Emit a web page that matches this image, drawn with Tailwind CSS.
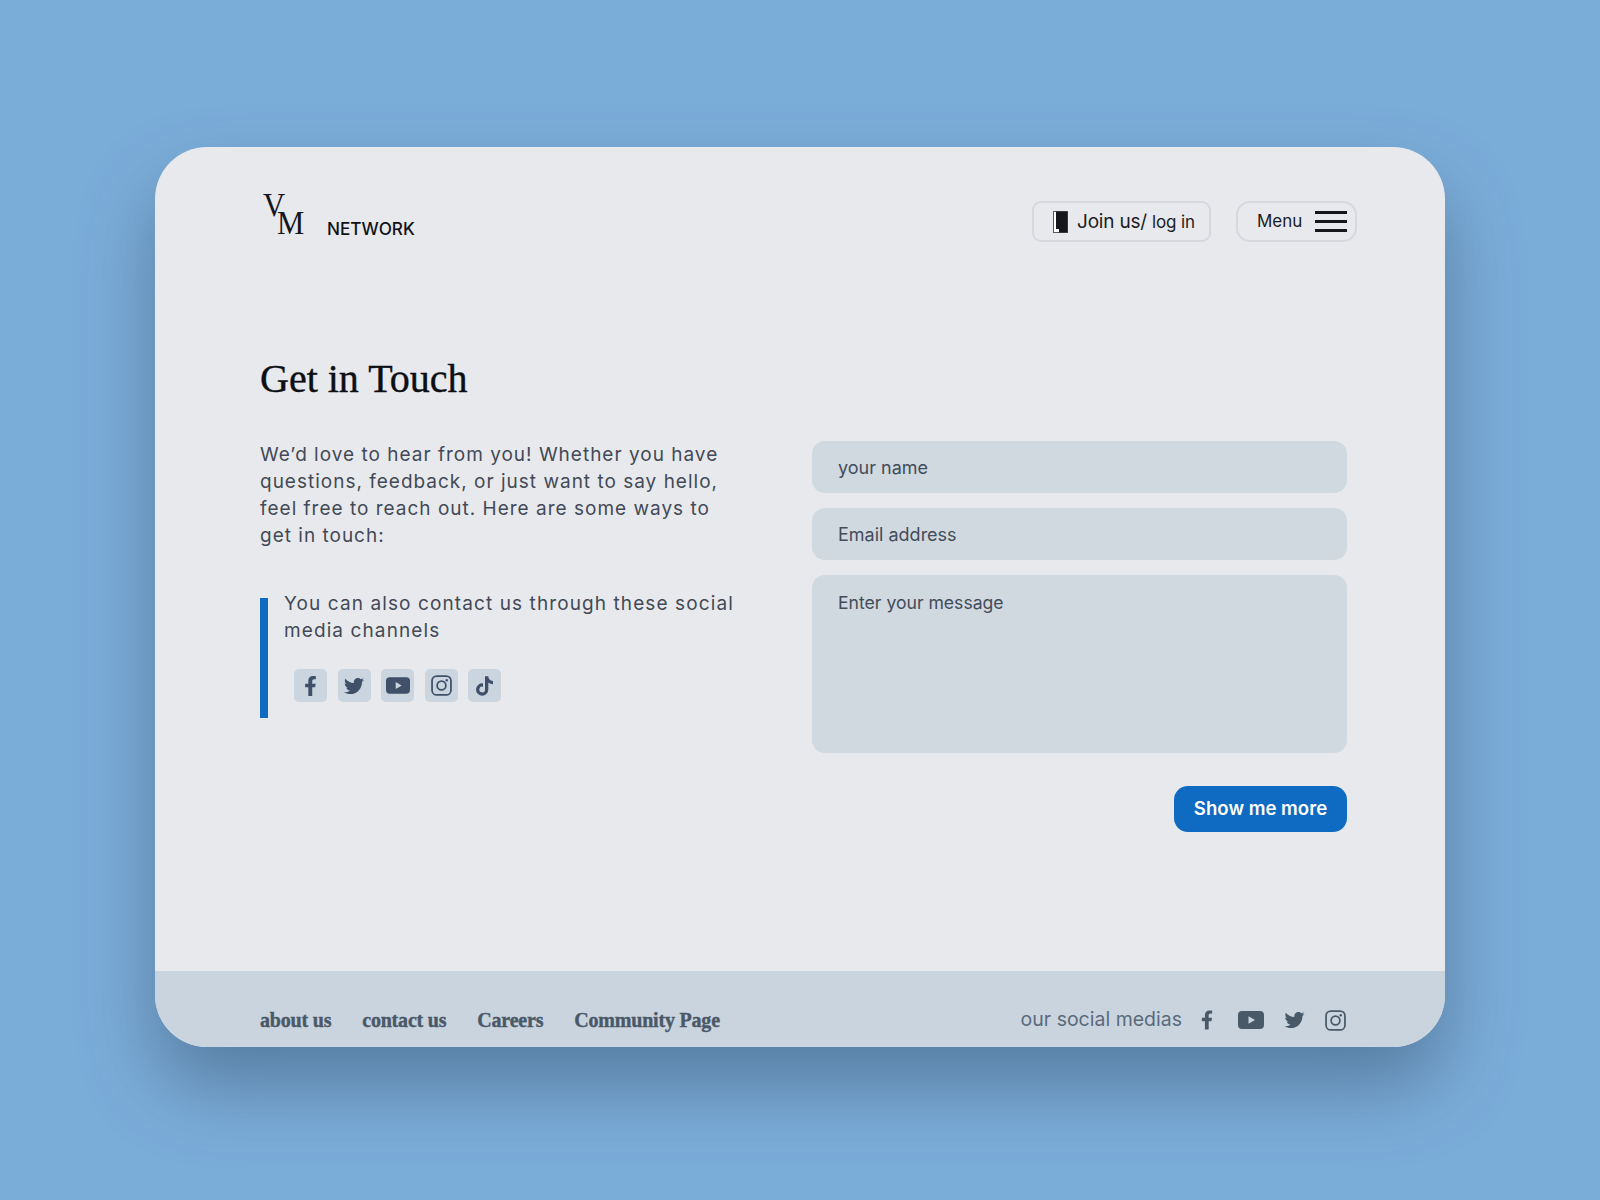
<!DOCTYPE html>
<html lang="en">
<head>
<meta charset="utf-8">
<title>Get in Touch</title>
<script src="https://cdn.jsdelivr.net/npm/@tailwindcss/browser@4"></script>
</head>
<body class="m-0 w-[1600px] h-[1200px] overflow-hidden bg-[#7badd9] font-['Inter',sans-serif]">
<svg class="hidden" aria-hidden="true">
  <symbol id="fb" viewBox="0 0 320 512"><path fill="currentColor" d="M279.14 288l14.22-92.66h-88.91v-60.13c0-25.35 12.42-50.06 52.24-50.06h40.42V6.26S260.43 0 225.36 0c-73.22 0-121.08 44.38-121.08 124.72v70.62H22.89V288h81.39v224h100.17V288z"/></symbol>
  <symbol id="tw" viewBox="0 0 512 512"><path fill="currentColor" d="M459.37 151.716c.325 4.548.325 9.097.325 13.645 0 138.72-105.583 298.558-298.558 298.558-59.452 0-114.68-17.219-161.137-47.106 8.447.974 16.568 1.299 25.34 1.299 49.055 0 94.213-16.568 130.274-44.832-46.132-.975-84.792-31.188-98.112-72.772 6.498.974 12.995 1.624 19.818 1.624 9.421 0 18.843-1.3 27.614-3.573-48.081-9.747-84.143-51.98-84.143-102.985v-1.299c13.969 7.797 30.214 12.67 47.431 13.319-28.264-18.843-46.781-51.005-46.781-87.391 0-19.492 5.197-37.36 14.294-52.954 51.655 63.675 129.3 105.258 216.365 109.807-1.624-7.797-2.599-15.918-2.599-24.04 0-57.828 46.782-104.934 104.934-104.934 30.213 0 57.502 12.67 76.67 33.137 23.715-4.548 46.456-13.32 66.599-25.34-7.798 24.366-24.366 44.833-46.132 57.827 21.117-2.273 41.584-8.122 60.426-16.243-14.292 20.791-32.161 39.308-52.628 54.253z"/></symbol>
  <symbol id="yt" viewBox="0 0 26 18"><path fill="currentColor" fill-rule="evenodd" d="M4 0h18a4 4 0 0 1 4 4v10a4 4 0 0 1-4 4H4a4 4 0 0 1-4-4V4a4 4 0 0 1 4-4zM10.5 5.2v7.6L17 9z"/></symbol>
  <symbol id="ig" viewBox="0 0 24 24"><rect x="1.2" y="1.2" width="21.6" height="21.6" rx="5.5" fill="none" stroke="currentColor" stroke-width="2"/><circle cx="12" cy="12" r="5" fill="none" stroke="currentColor" stroke-width="2"/><circle cx="18" cy="6" r="1.4" fill="currentColor"/></symbol>
  <symbol id="tt" viewBox="0 0 448 512"><path fill="currentColor" d="M448,209.91a210.06,210.06,0,0,1-122.77-39.25V349.38A162.55,162.55,0,1,1,185,188.31V278.2a74.62,74.62,0,1,0,52.23,71.18V0l88,0a121.18,121.18,0,0,0,1.86,22.17h0A122.18,122.18,0,0,0,381,102.39a121.43,121.43,0,0,0,67,20.14Z"/></symbol>
</svg>
<div class="pt-[147px] pl-[155px]">
  <div class="w-[1290px] h-[900px] rounded-[52px] bg-[#e7e9ed] flex flex-col overflow-hidden shadow-[0_40px_75px_rgba(50,75,105,0.48)]">
    <header class="h-[132px] shrink-0 pl-[105px] pr-[88px] pt-[46px] flex justify-between items-start">
      <div class="flex items-end">
        <div class="relative w-[67px] h-[46px] font-['Liberation_Serif',serif] text-[#15171c] leading-none">
          <span class="absolute left-[3px] top-[-5px] text-[34px] font-normal scale-x-[0.9] origin-left">V</span>
          <span class="absolute left-[17px] top-[13px] text-[34px] scale-x-[0.9] origin-left">M</span>
        </div>
        <span class="text-[17.2px] leading-[22px] font-medium text-[#111318] mb-[-1px]">NETWORK</span>
      </div>
      <div class="flex gap-[25px] mt-[8px]">
        <div class="w-[179px] h-[41px] rounded-[9px] border-2 border-[#d5d8dd] flex items-center pl-[19px] text-[#1b1d22]">
          <svg class="w-[15px] h-[22px] mr-[9px]" viewBox="0 0 15 22"><rect x="0.5" y="0.5" width="14" height="21" fill="#fff" stroke="#55585e"/><path d="M3 0.5h11.5v21H6V18H3z" fill="#14161b"/></svg>
          <span class="text-[19px] tracking-[-0.2px] translate-y-[1px]">Join us/</span><span class="text-[17px] ml-[5px] tracking-[-0.1px] translate-y-[1px]">log in</span>
        </div>
        <div class="w-[121px] h-[41px] rounded-[14px] border-2 border-[#d5d8dd] flex items-center pl-[19px] pr-[8px] justify-between text-[#1b1d22]">
          <span class="text-[17px]">Menu</span>
          <div class="w-[32px] flex flex-col gap-[6px]">
            <div class="h-[3px] bg-[#14161b]"></div>
            <div class="h-[3px] bg-[#14161b]"></div>
            <div class="h-[3px] bg-[#14161b]"></div>
          </div>
        </div>
      </div>
    </header>
    <main class="flex-1 relative pl-[105px] pr-[98px] flex justify-between">
      <section class="w-[490px]">
        <h1 class="mt-[75px] text-[40px] leading-[50px] font-normal text-[#0d0f13] font-['Liberation_Serif',serif] [-webkit-text-stroke:0.4px_#0d0f13]">Get in Touch</h1>
        <p class="mt-[37px] text-[19px] leading-[27px] tracking-[1px] text-[#434956] whitespace-nowrap">We’d love to hear from you! Whether you have<br>questions, feedback, or just want to say hello,<br>feel free to reach out. Here are some ways to<br>get in touch:</p>
        <div class="mt-[49px] flow-root border-l-[8px] border-[#0f6bc1] h-[120px] pl-[16px]">
          <p class="-mt-[8px] text-[19px] leading-[27px] tracking-[1.1px] text-[#434956] whitespace-nowrap">You can also contact us through these social<br>media channels</p>
          <div class="mt-[25px] ml-[10px] flex gap-[10.6px] text-[#3f5068]">
            <div class="w-[33px] h-[33px] rounded-[5px] bg-[#cbd5df] flex items-center justify-center"><svg class="w-[13px] h-[20px]"><use href="#fb"/></svg></div>
            <div class="w-[33px] h-[33px] rounded-[5px] bg-[#cbd5df] flex items-center justify-center"><svg class="w-[20px] h-[20px]"><use href="#tw"/></svg></div>
            <div class="w-[33px] h-[33px] rounded-[5px] bg-[#cbd5df] flex items-center justify-center"><svg class="w-[24px] h-[17px]"><use href="#yt"/></svg></div>
            <div class="w-[33px] h-[33px] rounded-[5px] bg-[#cbd5df] flex items-center justify-center"><svg class="w-[21px] h-[21px]"><use href="#ig"/></svg></div>
            <div class="w-[33px] h-[33px] rounded-[5px] bg-[#cbd5df] flex items-center justify-center"><svg class="w-[17px] h-[20px]"><use href="#tt"/></svg></div>
          </div>
        </div>
      </section>
      <form class="w-[535px] pt-[162px] flex flex-col">
        <input class="h-[52px] rounded-[13px] bg-[#d0d8e0] pl-[26px] text-[18px] text-[#434c5a] placeholder:text-[#434c5a] outline-none" placeholder="your name">
        <input class="mt-[15px] h-[52px] rounded-[13px] bg-[#d0d8e0] pl-[26px] text-[18px] text-[#434c5a] placeholder:text-[#434c5a] outline-none" placeholder="Email address">
        <textarea class="mt-[15px] h-[178px] resize-none rounded-[13px] bg-[#d0d8e0] pl-[26px] pt-[15px] text-[17.6px] text-[#434c5a] placeholder:text-[#434c5a] outline-none" placeholder="Enter your message"></textarea>
        <button type="button" class="mt-[33px] self-end w-[173px] h-[46px] rounded-[14px] bg-[#0f6bc1] text-white text-[18.6px] font-semibold">Show me more</button>
      </form>
    </main>
    <footer class="h-[76px] shrink-0 bg-[#cad4df] pl-[105px] pr-[99px] pb-[3px] pt-[25px] flex justify-between items-center text-[#4a5968]">
      <nav class="flex gap-[31px] text-[20px] tracking-[-0.2px] font-bold font-['Liberation_Serif',serif] [-webkit-text-stroke:0.4px_#4a5968]">
        <span>about us</span><span>contact us</span><span>Careers</span><span>Community Page</span>
      </nav>
      <div class="flex items-center">
        <span class="text-[19.5px] text-[#5a6a7b] mr-[19px]">our social medias</span>
        <svg class="w-[12px] h-[20px] mr-[25px]"><use href="#fb"/></svg>
        <svg class="w-[26px] h-[18px] mr-[20px]"><use href="#yt"/></svg>
        <svg class="w-[21px] h-[20px] mr-[20px]"><use href="#tw"/></svg>
        <svg class="w-[21px] h-[21px]"><use href="#ig"/></svg>
      </div>
    </footer>
  </div>
</div>
</body>
</html>
